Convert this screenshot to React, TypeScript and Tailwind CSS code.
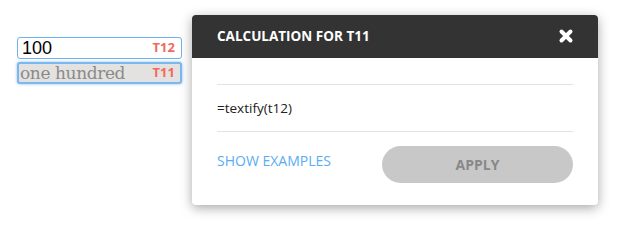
import React from "react";

export default function App() {
  return (
    <div className="flex items-start w-[641px] h-[230px] bg-white">
      <div className="flex flex-col gap-[3px] ml-[17px] mt-[37px] w-[165px]">
        <div className="flex items-center justify-between h-[22px] rounded-[3px] border border-[#6fb2f0] bg-white pl-[4px] pr-[6px]">
          <span className="text-[18px] leading-none text-black font-['Liberation_Sans',sans-serif]">100</span>
          <span className="text-[13px] font-bold text-[#f26a5e] font-['Open_Sans',sans-serif]">T12</span>
        </div>
        <div className="flex items-center justify-between h-[22px] rounded-[3px] border-2 border-[#7ab8f0] bg-[#e4e2e0] pl-[1px] pr-[5px] shadow-[0_0_3px_rgba(90,160,240,0.7)]">
          <span className="text-[17px] leading-none text-[#8a8a8a] font-['DejaVu_Serif',serif] tracking-[-0.4px]">one hundred</span>
          <span className="text-[13px] font-bold text-[#f26a5e] font-['Open_Sans',sans-serif]">T11</span>
        </div>
      </div>
      <div className="ml-[10px] mt-[15px] w-[406px] rounded-[4px] bg-white shadow-[0_3px_12px_rgba(0,0,0,0.35)] font-['Open_Sans',sans-serif] overflow-hidden">
        <div className="flex items-center justify-between h-[43px] bg-[#333333] pl-[25px] pr-[24px]">
          <span className="text-[13.5px] font-bold text-white">CALCULATION FOR T11</span>
          <svg width="16" height="16" viewBox="0 0 16 16" className="mt-[-1px]">
            <path d="M3.5 3.5 L12.5 12.5 M12.5 3.5 L3.5 12.5" stroke="white" strokeWidth="4" strokeLinecap="round" />
          </svg>
        </div>
        <div className="px-[25px] pt-[26px] pb-[22px]">
          <div className="border-t border-[#e3e3e3] h-[47px] flex items-center">
            <span className="text-[13.5px] text-[#222]">=textify(t12)</span>
          </div>
          <div className="border-t border-[#e3e3e3] pt-[14px] flex items-start justify-between">
            <span className="mt-[4px] text-[14px] text-[#5aacf5]">SHOW EXAMPLES</span>
            <button className="w-[191px] h-[37px] rounded-full bg-[#c8c8c8] text-[14px] font-bold text-[#888888]">APPLY</button>
          </div>
        </div>
      </div>
    </div>
  );
}
